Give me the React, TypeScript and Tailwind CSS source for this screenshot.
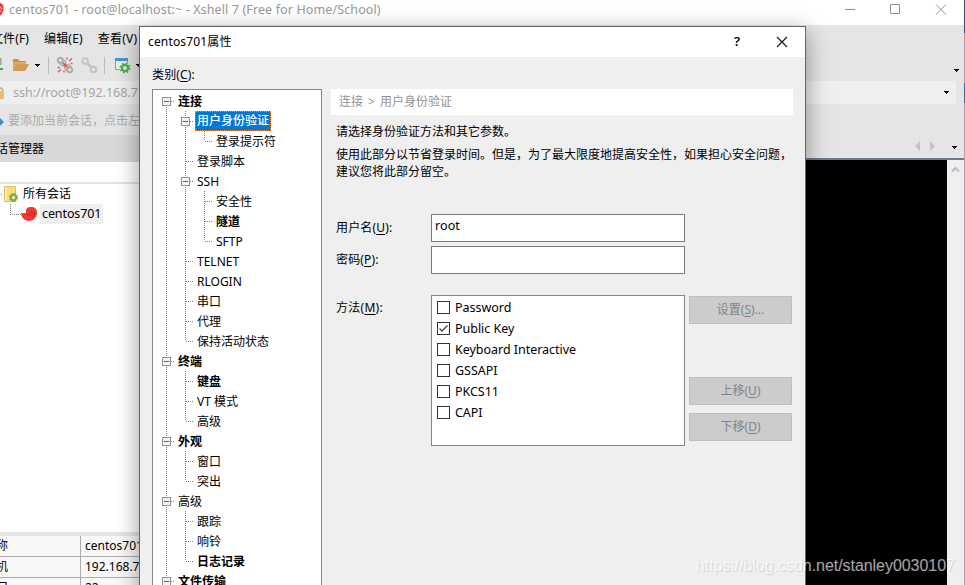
import type { ReactNode } from "react";

type Guide = "line" | "tee" | "end" | "box" | "boxTop";

type TreeRow = {
  label: string;
  guides: Guide[];
  bold?: boolean;
  selected?: boolean;
};

const TREE: TreeRow[] = [
  { label: "连接", guides: ["boxTop"], bold: true },
  { label: "用户身份验证", guides: ["line", "box"], selected: true },
  { label: "登录提示符", guides: ["line", "line", "end"] },
  { label: "登录脚本", guides: ["line", "tee"] },
  { label: "SSH", guides: ["line", "box"] },
  { label: "安全性", guides: ["line", "line", "tee"] },
  { label: "隧道", guides: ["line", "line", "tee"], bold: true },
  { label: "SFTP", guides: ["line", "line", "end"] },
  { label: "TELNET", guides: ["line", "tee"] },
  { label: "RLOGIN", guides: ["line", "tee"] },
  { label: "串口", guides: ["line", "tee"] },
  { label: "代理", guides: ["line", "tee"] },
  { label: "保持活动状态", guides: ["line", "end"] },
  { label: "终端", guides: ["box"], bold: true },
  { label: "键盘", guides: ["line", "tee"], bold: true },
  { label: "VT 模式", guides: ["line", "tee"] },
  { label: "高级", guides: ["line", "end"] },
  { label: "外观", guides: ["box"], bold: true },
  { label: "窗口", guides: ["line", "tee"] },
  { label: "突出", guides: ["line", "end"] },
  { label: "高级", guides: ["box"] },
  { label: "跟踪", guides: ["line", "tee"] },
  { label: "响铃", guides: ["line", "tee"] },
  { label: "日志记录", guides: ["line", "end"], bold: true },
  { label: "文件传输", guides: ["box"], bold: true },
];

const METHODS = [
  { label: "Password", checked: false },
  { label: "Public Key", checked: true },
  { label: "Keyboard Interactive", checked: false },
  { label: "GSSAPI", checked: false },
  { label: "PKCS11", checked: false },
  { label: "CAPI", checked: false },
];

function GuideCell({ kind }: { kind: Guide }) {
  const isBox = kind.startsWith("box");
  return (
    <svg width="19" height="20" viewBox="0 0 19 20" className="shrink-0" shapeRendering="crispEdges">
      <g stroke="#808080" strokeDasharray="1 1">
        {kind !== "boxTop" && <path d="M9.5 0V10" />}
        {kind !== "end" && <path d="M9.5 10V20" />}
        {kind !== "line" && <path d="M10 10.5H18" />}
      </g>
      {isBox && (
        <>
          <rect x="5.5" y="6.5" width="8" height="8" fill="#f3f3f3" stroke="#919191" />
          <path d="M7 10.5H12" stroke="#4a63a8" />
        </>
      )}
    </svg>
  );
}

function Caret({ className = "" }: { className?: string }) {
  return (
    <svg width="5" height="3" viewBox="0 0 5 3" className={className} shapeRendering="crispEdges">
      <path d="M0 0H5V1H4V2H3V3H2V2H1V1H0Z" fill="#000" />
    </svg>
  );
}

function Key({ text, k, tail = "" }: { text: string; k: string; tail?: string }) {
  return (
    <span className="whitespace-nowrap">
      {text}(<span className="underline underline-offset-2">{k}</span>){tail}
    </span>
  );
}

function DisabledButton({ children }: { children: ReactNode }) {
  return (
    <button className="flex h-7 w-[103px] items-center justify-center border border-[#bfbfbf] bg-[#cccccc] text-[#838383]">
      {children}
    </button>
  );
}

function Toolbar() {
  return (
    <div className="flex h-[31px] items-center bg-[#e5e5e5]">
      <svg width="142" height="31" viewBox="0 0 142 31" className="shrink-0">
        <path d="M0 8H1.5V15H0Z" fill="#a0a0a0" />
        <path d="M0 18H3V20H0Z" fill="#35b035" />
        {/* open folder */}
        <path d="M13 9H18L20 11H26V14H13Z" fill="#c98f4c" />
        <path d="M13 21V12H26V14H29L25 21Z" fill="#dda868" />
        <path d="M13 21L16.5 14H29L25 21Z" fill="#d29b59" />
        <path d="M35 14H40V15H39V16H38V17H37V16H36V15H35Z" fill="#000" shapeRendering="crispEdges" />
        <path d="M48.5 7V24M104.5 7V24" stroke="#bcbcbc" />
        {/* disconnect */}
        <g fill="none" stroke="#ababab" strokeWidth="2">
          <circle cx="60.3" cy="10.3" r="2.5" />
          <circle cx="69.7" cy="19.7" r="2.5" />
          <path d="M63.5 9.5L65.5 11.5V14M59.5 13L62 15.5H64.5M66.5 15L69 15L71.5 17.5M64.5 16.5L65 19L67.5 21.5" strokeWidth="1.5" />
        </g>
        <g fill="none" stroke="#e65757" strokeWidth="1.4">
          <path d="M62.5 12.5L68 18M69 11L72 8.5M58 22L61 19.5M70.5 13.5H72.5M64 20.5V22.5M67 9.5V7.5M57.5 17.5H60" />
          <circle cx="65.2" cy="15.2" r="1.1" fill="#e65757" />
        </g>
        {/* reconnect */}
        <g fill="none" stroke="#c5c5c5" strokeWidth="2">
          <circle cx="85" cy="11" r="2.8" />
          <circle cx="93.5" cy="19.5" r="2.8" />
          <path d="M87 13L91.5 17.5" strokeWidth="3" />
        </g>
        {/* session properties */}
        <path d="M115.5 8.5H127.5V19.5H115.5Z" fill="#e9edf0" stroke="#989898" />
        <path d="M115 8H128V11H115Z" fill="#4c92cf" />
        <circle cx="125" cy="18" r="5.7" fill="#e5e5e5" />
        <circle cx="125" cy="18" r="3" fill="none" stroke="#49ae4d" strokeWidth="2" />
        <circle cx="125" cy="18" r="4.6" fill="none" stroke="#49ae4d" strokeWidth="1.7" strokeDasharray="1.8 1.813" />
        <path d="M136 14H141V15H140V16H139V17H138V16H137V15H136Z" fill="#000" shapeRendering="crispEdges" />
      </svg>
      <Caret className="mt-[9px] mr-[5px] ml-auto" />
    </div>
  );
}

function MainWindow() {
  return (
    <div className="flex h-full">
      <div className="flex min-w-0 flex-1 flex-col">
        <div className="flex h-[25px] shrink-0 items-center bg-white text-[#999999]">
          <svg width="9" height="20" viewBox="0 0 9 20" className="-mt-[5px] shrink-0">
            <path d="M0 3C3 3 4 6 3.4 10C3 13 1.5 15 0 16V12L1 11L0 10Z" fill="#ef4444" />
            <path d="M0 7L2 9" stroke="#fff" />
          </svg>
          <span className="-mt-[4px] text-[12.5px] tracking-[0.12px] whitespace-nowrap">
            centos701 - root@localhost:~ - Xshell 7 (Free for Home/School)
          </span>
          <svg width="112" height="20" viewBox="0 0 112 20" className="-mt-[5px] mr-3 ml-auto" fill="none" stroke="#909090">
            <path d="M5 9.5H15M50.5 4.5H59.5V13.5H50.5ZM96 4.5L106 14.5M106 4.5L96 14.5" />
          </svg>
        </div>

        <div className="flex h-[25px] shrink-0 items-center gap-[15px] bg-[#e5e5e5] pt-[2px] whitespace-nowrap">
          <span className="-ml-[9px] tracking-[0.1px]">文件(F)</span>
          <span className="tracking-[0.2px]">编辑(E)</span>
          <span className="tracking-[0.2px]">查看(V)</span>
        </div>
        <Toolbar />
        <div className="flex h-[23px] shrink-0 bg-[#e5e5e5] pr-2">
          <div className="flex flex-1 items-center bg-[#efefef] text-[12.5px] text-[#a5a5a5]">
            <svg width="13" height="18" viewBox="0 0 13 18" className="shrink-0">
              <path d="M0 4C2.2 4 2.8 5.5 2.8 8" fill="none" stroke="#c4a57c" strokeWidth="1.5" />
              <path d="M0 7H4V15H0Z" fill="#e8bd7c" />
            </svg>
            <span className="pt-[2px]">ssh://root@192.168.72.130:22</span>
            <Caret className="mr-[7px] ml-auto" />
          </div>
        </div>

        <div className="flex min-h-0 flex-1">
          <div className="flex w-[170px] shrink-0 flex-col overflow-hidden whitespace-nowrap">
            <div className="flex h-[31px] shrink-0 items-center bg-[#e5e5e5] text-[#aaaaaa]">
              <svg width="8" height="12" viewBox="0 0 8 12" className="mt-1 shrink-0">
                <path d="M0 2L4 6L0 10Z" fill="#4e86d4" />
              </svg>
              <span className="mt-[2px]">要添加当前会话，点击左侧的箭头</span>
            </div>
            <div className="flex h-[27px] shrink-0 items-center bg-[#d8d8d8]">
              <span className="-ml-[4px]">话管理器</span>
            </div>
            <div className="h-5 shrink-0 bg-white" />
            <div className="h-[2px] shrink-0 bg-[#e2e2e2]" />
            <div className="flex-1 bg-white">
              <div className="flex h-5 items-center">
                <svg width="22" height="20" viewBox="0 0 22 20" className="shrink-0">
                  <path d="M1 10.5H3" stroke="#808080" strokeDasharray="1 1" />
                  <path d="M4.5 2.5H15.5V17.5H4.5Z" fill="#fadc79" stroke="#dfbf55" />
                  <path d="M5 3H7V17H5Z" fill="#ffebaa" />
                  <circle cx="13.5" cy="13.5" r="2.6" fill="#fff" stroke="#83aa37" strokeWidth="2.2" />
                  <circle cx="13.5" cy="13.5" r="4" fill="none" stroke="#83aa37" strokeWidth="1.2" strokeDasharray="1.5 1.64" />
                </svg>
                <span className="pl-px">所有会话</span>
              </div>
              <div className="flex h-5 items-center">
                <svg width="40" height="20" viewBox="0 0 40 20" className="shrink-0">
                  <path d="M10.5 0V10M10 10.5H21" fill="none" stroke="#808080" strokeDasharray="1 1" shapeRendering="crispEdges" />
                  <path d="M21 9C23 9 25 9.5 26.5 8.5C24.5 5 28 2.3 31.5 3C35 2.4 37.5 6 37 9.5C36.6 14 33 17 29 17C25 17 21.5 14 21 9Z" fill="#f0392f" />
                  <path d="M26.5 8.5C27 12 32 12 32.5 9C32 7 30 7.5 30.5 9M32 13C34 12 35 10 34.5 8" fill="none" stroke="#b5262b" />
                </svg>
                <span className="flex h-[20px] items-center bg-[#efefef] px-[2px] text-[12.5px] tracking-[-0.1px]">centos701</span>
              </div>
            </div>
            <div className="h-[4px] shrink-0 bg-[#e5e5e5]" />
            <div className="grid h-[49px] shrink-0 grid-cols-[80px_1fr] grid-rows-[20px_20px_20px] gap-px overflow-hidden bg-[#ababab]">
              <div className="flex items-center bg-[#f8f8f8]"><span className="-ml-[4px]">称</span></div>
              <div className="flex items-center bg-[#f8f8f8] pl-1 text-[12px]">centos701</div>
              <div className="flex items-center bg-[#f8f8f8]"><span className="-ml-[4px]">机</span></div>
              <div className="flex items-center bg-[#f8f8f8] pl-1 text-[12px]">192.168.72.130</div>
              <div className="flex items-center bg-[#f8f8f8]"><span className="-ml-[4px]">口</span></div>
              <div className="flex items-center bg-[#f8f8f8] pl-1 text-[12px]">22</div>
            </div>
          </div>

          <div className="flex flex-1 flex-col">
            <div className="flex h-[54px] shrink-0 justify-end bg-[#e5e5e5]">
              <svg width="50" height="54" viewBox="0 0 50 54">
                <path d="M6 37V47L1 42ZM16 37V47L21 42Z" fill="#c3c3c3" />
                <path d="M38 42H43V43H42V44H41V45H40V44H39V43H38Z" fill="#000" shapeRendering="crispEdges" />
              </svg>
            </div>
            <div className="h-[2px] shrink-0 bg-[#6d7890]" />
            <div className="flex flex-1 bg-black">
              <div className="ml-auto w-[17px] bg-[#efefef]">
                <svg width="17" height="20" viewBox="0 0 17 20">
                  <path d="M5 11.5L8.5 8L12 11.5" fill="none" stroke="#bcbcbc" strokeWidth="2" />
                </svg>
              </div>
            </div>
          </div>
        </div>
      </div>

      {/* sliver of the desktop beside the window */}
      <div className="flex w-px flex-col bg-[#a5a5a5]">
        <div className="h-[33px] bg-[#245491]" />
        <div className="mt-[50px] h-5 bg-[#1976b8]" />
      </div>
    </div>
  );
}

function CategoryTree() {
  return (
    <div className="h-[520px] w-[170px] shrink-0 overflow-hidden border border-[#828790] bg-white pt-px pl-1">
      {TREE.map((row, i) => (
        <div key={i} className="flex h-5 items-center whitespace-nowrap">
          {row.guides.map((g, j) => (
            <GuideCell key={j} kind={g} />
          ))}
          <span
            className={
              row.selected
                ? "flex h-5 items-center border border-dotted border-[#f28c28] bg-[#0078d7] px-px font-medium text-white"
                : row.bold
                  ? "pt-px pl-[2px] font-bold"
                  : "pt-px pl-[2px]"
            }
          >
            {row.label}
          </span>
        </div>
      ))}
    </div>
  );
}

function AuthPage() {
  return (
    <div className="flex w-[462px] flex-col">
      <div className="flex h-[26px] items-center bg-white pl-2 text-[#929292]">
        连接 <span className="mx-[5px]">&gt;</span> 用户身份验证
      </div>
      <p className="mt-[8px] pl-[5px] leading-[17px]">请选择身份验证方法和其它参数。</p>
      <p className="mt-[6px] pl-[5px] leading-[17px] whitespace-nowrap">
        使用此部分以节省登录时间。但是，为了最大限度地提高安全性，如果担心安全问题，
        <br />
        建议您将此部分留空。
      </p>

      <div className="mt-[34px] flex h-7 items-center pl-[5px]">
        <div className="w-[95px] tracking-[0.15px]">
          <Key text="用户名" k="U" tail=":" />
        </div>
        <div className="flex h-7 w-[254px] items-center border border-[#7a7a7a] bg-white pb-[3px] pl-[3px] text-[12.5px] tracking-[0.1px]">
          root
        </div>
      </div>
      <div className="mt-1 flex h-7 items-center pl-[5px]">
        <div className="w-[95px] tracking-[0.15px]">
          <Key text="密码" k="P" tail=":" />
        </div>
        <div className="h-7 w-[254px] border border-[#7a7a7a] bg-white" />
      </div>

      <div className="mt-[21px] flex pl-[5px]">
        <div className="w-[95px] pt-[7px] tracking-[0.25px]">
          <Key text="方法" k="M" tail=":" />
        </div>
        <div className="h-[151px] w-[254px] border border-[#828790] bg-white pt-[2px] pl-[5px]">
          {METHODS.map((m) => (
            <div key={m.label} className="flex h-[21px] items-center gap-[5px] text-[12.5px] tracking-[-0.03px]">
              <svg width="13" height="13" viewBox="0 0 13 13" className="mb-[2px]">
                <rect x=".5" y=".5" width="12" height="12" fill="#fff" stroke="#333" />
                {m.checked && <path d="M2.5 6.5L5 9L10.5 3.5" fill="none" stroke="#444" strokeWidth="1.3" />}
              </svg>
              {m.label}
            </div>
          ))}
        </div>
        <div className="ml-1 flex flex-col pt-px">
          <DisabledButton>
            <Key text="设置" k="S" tail="..." />
          </DisabledButton>
          <div className="h-[53px]" />
          <DisabledButton>
            <Key text="上移" k="U" />
          </DisabledButton>
          <div className="h-2" />
          <DisabledButton>
            <Key text="下移" k="D" />
          </DisabledButton>
        </div>
      </div>
    </div>
  );
}

function PropertiesDialog() {
  return (
    <div className="absolute top-[26px] left-[139px] h-[600px] w-[667px] border border-[#666666] bg-[#efefef] shadow-[0_6px_22px_rgba(0,0,0,0.4)]">
      <div className="flex h-[30px] items-center bg-white pl-2">
        <span className="text-[12px] tracking-[0.15px]">centos701属性</span>
        <span className="-mt-[2px] ml-auto text-[13px] font-semibold">?</span>
        <svg width="12" height="12" viewBox="0 0 12 12" className="-mt-px mr-[17px] ml-9">
          <path d="M1 1L11 11M11 1L1 11" stroke="#111" strokeWidth="1.1" />
        </svg>
      </div>
      <div className="flex h-[32px] items-center pt-[4px] pl-3 tracking-[0.15px]">
        <Key text="类别" k="C" tail=":" />
      </div>
      <div className="flex gap-[9px] pl-3">
        <CategoryTree />
        <AuthPage />
      </div>
    </div>
  );
}

export default function App() {
  return (
    <div className="relative h-[585px] w-[965px] overflow-hidden bg-white font-['Noto_Sans','Noto_Sans_CJK_SC',sans-serif] text-[12px] leading-none text-black">
      <MainWindow />
      <PropertiesDialog />
      <div className="pointer-events-none absolute top-[558px] left-[696px] font-['Liberation_Sans',sans-serif] text-[16px] leading-4 tracking-[-0.05px] whitespace-nowrap text-white/65 [text-shadow:1px_1px_1px_rgba(0,0,0,0.12)]">
        https://blog.csdn.net/stanley0030107
      </div>
    </div>
  );
}
